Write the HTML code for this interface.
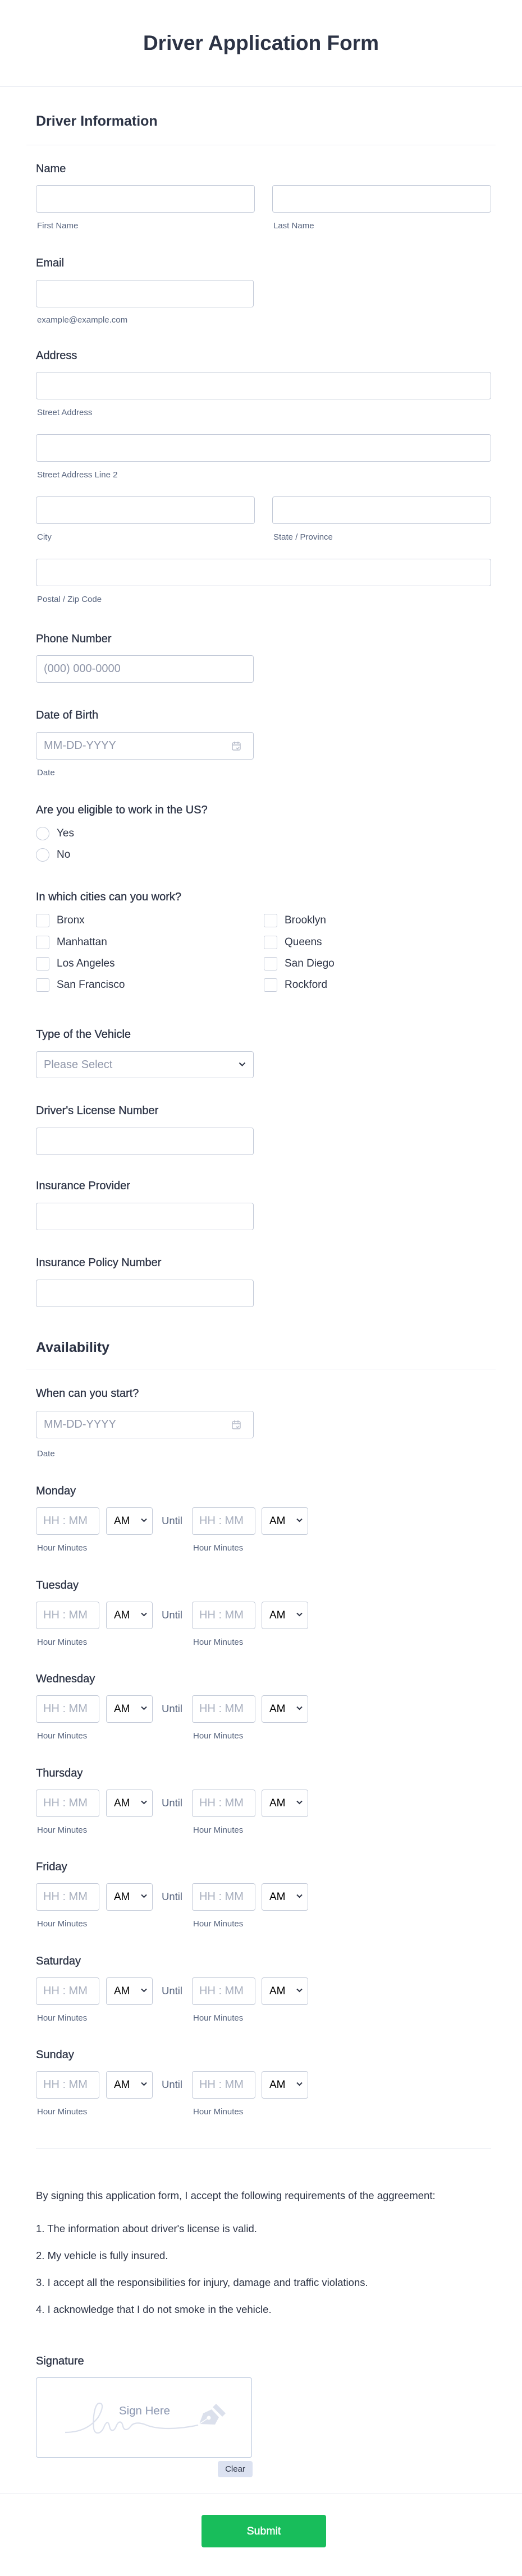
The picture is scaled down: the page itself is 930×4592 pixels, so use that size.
<!DOCTYPE html>
<html><head><meta charset="utf-8"><style>
*{box-sizing:border-box;margin:0;padding:0}
body{width:930px;height:4592px;background:#fff;font-family:"Liberation Sans",Arial,sans-serif;color:#2c3345;position:relative;overflow:hidden}
.a{position:absolute;white-space:nowrap}
.t{font-size:37px;font-weight:bold;line-height:44px;left:0;width:930px;text-align:center;color:#2c3345}
.h{font-size:25px;font-weight:bold;line-height:30px;left:64px}
.l{font-size:20px;line-height:24px;left:64px;-webkit-text-stroke:0.35px #2c3345}
.s{font-size:15px;line-height:18px;color:#57647e}
.i{border:1px solid #c3cad8;border-radius:4px;height:49px;background:#fff}
.ph{font-size:20px;color:#8f96a9;line-height:47px;padding-left:13px}
.hr{height:1px;background:#e6e9f0}
.o{font-size:19px;line-height:24px;color:#2c3345}
.rb{width:24px;height:24px;border:1px solid #c3cad8;border-radius:50%}
.cb{width:24px;height:24px;border:1px solid #c3cad8;border-radius:3px}
.hh{font-size:20px;color:#a9b0bf;line-height:47px;padding-left:12px}
.am{font-size:19px;color:#000;line-height:47px;padding-left:13px}
.chev{position:absolute;right:9px;top:18px}
.p{font-size:18.5px;line-height:24px;left:64px;color:#2c3345}
</style></head><body>
<div class="a t" style="top:55px">Driver Application Form</div>
<div class="a hr" style="top:154px;left:0;width:930px"></div>
<div class="a h" style="top:201px">Driver Information</div>
<div class="a hr" style="top:258px;left:47px;width:836px"></div>

<div class="a l" style="top:289px">Name</div>
<div class="a i" style="top:330px;left:64px;width:390px"></div>
<div class="a i" style="top:330px;left:485px;width:390px"></div>
<div class="a s" style="top:394px;left:66px">First Name</div>
<div class="a s" style="top:394px;left:487px">Last Name</div>

<div class="a l" style="top:457px">Email</div>
<div class="a i" style="top:499px;left:64px;width:388px"></div>
<div class="a s" style="top:562px;left:66px">example@example.com</div>

<div class="a l" style="top:622px">Address</div>
<div class="a i" style="top:663px;left:64px;width:811px"></div>
<div class="a s" style="top:727px;left:66px">Street Address</div>
<div class="a i" style="top:774px;left:64px;width:811px"></div>
<div class="a s" style="top:838px;left:66px">Street Address Line 2</div>
<div class="a i" style="top:885px;left:64px;width:390px"></div>
<div class="a i" style="top:885px;left:485px;width:390px"></div>
<div class="a s" style="top:949px;left:66px">City</div>
<div class="a s" style="top:949px;left:487px">State / Province</div>
<div class="a i" style="top:996px;left:64px;width:811px"></div>
<div class="a s" style="top:1060px;left:66px">Postal / Zip Code</div>

<div class="a l" style="top:1127px">Phone Number</div>
<div class="a i ph" style="top:1168px;left:64px;width:388px">(000) 000-0000</div>

<div class="a l" style="top:1263px">Date of Birth</div>
<div class="a i ph" style="top:1305px;left:64px;width:388px">MM-DD-YYYY
<svg style="position:absolute;right:22px;top:15px" width="16" height="18" viewBox="0 0 16 18" fill="none" stroke="#b4bac8" stroke-width="1.4"><rect x="1" y="3" width="14" height="13" rx="2"/><path d="M1 7h14M5 1v4M11 1v4M8 12l2 2 3-3"/></svg></div>
<div class="a s" style="top:1369px;left:66px">Date</div>

<div class="a l" style="top:1432px">Are you eligible to work in the US?</div>
<div class="a rb" style="top:1474px;left:64px"></div><div class="a o" style="top:1474px;left:101px">Yes</div>
<div class="a rb" style="top:1512px;left:64px"></div><div class="a o" style="top:1512px;left:101px">No</div>

<div class="a l" style="top:1587px">In which cities can you work?</div>
<div class="a cb" style="top:1629px;left:64px"></div><div class="a o" style="top:1629px;left:101px">Bronx</div>
<div class="a cb" style="top:1668px;left:64px"></div><div class="a o" style="top:1668px;left:101px">Manhattan</div>
<div class="a cb" style="top:1706px;left:64px"></div><div class="a o" style="top:1706px;left:101px">Los Angeles</div>
<div class="a cb" style="top:1744px;left:64px"></div><div class="a o" style="top:1744px;left:101px">San Francisco</div>
<div class="a cb" style="top:1629px;left:470px"></div><div class="a o" style="top:1629px;left:507px">Brooklyn</div>
<div class="a cb" style="top:1668px;left:470px"></div><div class="a o" style="top:1668px;left:507px">Queens</div>
<div class="a cb" style="top:1706px;left:470px"></div><div class="a o" style="top:1706px;left:507px">San Diego</div>
<div class="a cb" style="top:1744px;left:470px"></div><div class="a o" style="top:1744px;left:507px">Rockford</div>

<div class="a l" style="top:1832px">Type of the Vehicle</div>
<div class="a i ph" style="top:1874px;left:64px;width:388px;height:48px;line-height:46px">Please Select
<svg style="position:absolute;right:13px;top:18px" width="13" height="9" viewBox="0 0 13 9" fill="none" stroke="#2c3345" stroke-width="2"><path d="M1.5 1.5l5 5 5-5"/></svg></div>

<div class="a l" style="top:1968px">Driver's License Number</div>
<div class="a i" style="top:2010px;left:64px;width:388px"></div>
<div class="a l" style="top:2102px">Insurance Provider</div>
<div class="a i" style="top:2144px;left:64px;width:388px"></div>
<div class="a l" style="top:2239px">Insurance Policy Number</div>
<div class="a i" style="top:2281px;left:64px;width:388px"></div>

<div class="a h" style="top:2387px">Availability</div>
<div class="a hr" style="top:2440px;left:47px;width:836px"></div>
<div class="a l" style="top:2472px">When can you start?</div>
<div class="a i ph" style="top:2515px;left:64px;width:388px">MM-DD-YYYY
<svg style="position:absolute;right:22px;top:15px" width="16" height="18" viewBox="0 0 16 18" fill="none" stroke="#b4bac8" stroke-width="1.4"><rect x="1" y="3" width="14" height="13" rx="2"/><path d="M1 7h14M5 1v4M11 1v4M8 12l2 2 3-3"/></svg></div>
<div class="a s" style="top:2583px;left:66px">Date</div>

<div id="days"></div>
<script>
var d=["Monday","Tuesday","Wednesday","Thursday","Friday","Saturday","Sunday"],h="";
var chev='<svg class="chev" width="11" height="8" viewBox="0 0 11 8" fill="none" stroke="#2c3345" stroke-width="2"><path d="M1 1.5l4.5 4.5 4.5-4.5"/></svg>';
for(var k=0;k<7;k++){var y=2658+k*167.5;
h+='<div class="a l" style="top:'+(y-12)+'px">'+d[k]+'</div>';
h+='<div class="a i hh" style="top:'+(y+29)+'px;left:64px;width:113px">HH : MM</div>';
h+='<div class="a i am" style="top:'+(y+29)+'px;left:189px;width:83px">AM'+chev+'</div>';
h+='<div class="a" style="top:'+(y+42)+'px;left:288px;font-size:18.5px;line-height:22px;color:#57647e">Until</div>';
h+='<div class="a i hh" style="top:'+(y+29)+'px;left:342px;width:113px">HH : MM</div>';
h+='<div class="a i am" style="top:'+(y+29)+'px;left:466px;width:83px">AM'+chev+'</div>';
h+='<div class="a s" style="top:'+(y+93)+'px;left:66px">Hour Minutes</div>';
h+='<div class="a s" style="top:'+(y+93)+'px;left:344px">Hour Minutes</div>';}
document.getElementById("days").innerHTML=h;
</script>

<div class="a hr" style="top:3829px;left:64px;width:811px"></div>
<div class="a p" style="top:3902px">By signing this application form, I accept the following requirements of the aggreement:</div>
<div class="a p" style="top:3961px">1. The information about driver's license is valid.</div>
<div class="a p" style="top:4009px">2. My vehicle is fully insured.</div>
<div class="a p" style="top:4057px">3. I accept all the responsibilities for injury, damage and traffic violations.</div>
<div class="a p" style="top:4105px">4. I acknowledge that I do not smoke in the vehicle.</div>

<div class="a l" style="top:4197px">Signature</div>
<div class="a" style="top:4238px;left:64px;width:385px;height:143px;border:1px solid #b8c6dc;border-radius:4px">
<svg width="385" height="143" style="position:absolute;left:0;top:0" fill="none">
<path d="M51,97 C80,97 98,86 110,70 C118,56 120,45 112,45 C104,45 100,70 102,90 C104,102 115,100 120,88 C124,78 128,76 130,86 C132,96 138,96 142,86 C146,76 152,76 154,86 C156,94 162,94 168,86 C172,80 182,78 196,84 C216,92 250,92 288,84" stroke="#dbe0ec" stroke-width="2.2"/>
<path d="M290,82 L297,63 L312,56 L325,70 L318,83 Z" fill="#dbe0ec"/>
<path d="M314,52 L320,46 L337,63 L331,69 Z" fill="#dbe0ec"/>
<circle cx="307" cy="71" r="3.5" fill="#fff"/>
<path d="M290,82 L305,72" stroke="#fff" stroke-width="1.5"/>
</svg>
<div class="a" style="top:47px;left:0;width:385px;text-align:center;font-size:20.5px;color:#8d98b2;line-height:24px">Sign Here</div>
</div>
<div class="a" style="top:4387px;left:388px;width:62px;height:29px;background:#dce2f1;border-radius:4px;font-size:15px;line-height:29px;text-align:center;color:#2c3345">Clear</div>

<div class="a hr" style="top:4445px;left:0;width:930px"></div>
<div class="a" style="top:4483px;left:359px;width:222px;height:58px;background:#18bd5b;border-radius:4px;color:#fff;font-size:19.5px;line-height:58px;text-align:center;-webkit-text-stroke:0.4px #fff">Submit</div>
</body></html>
